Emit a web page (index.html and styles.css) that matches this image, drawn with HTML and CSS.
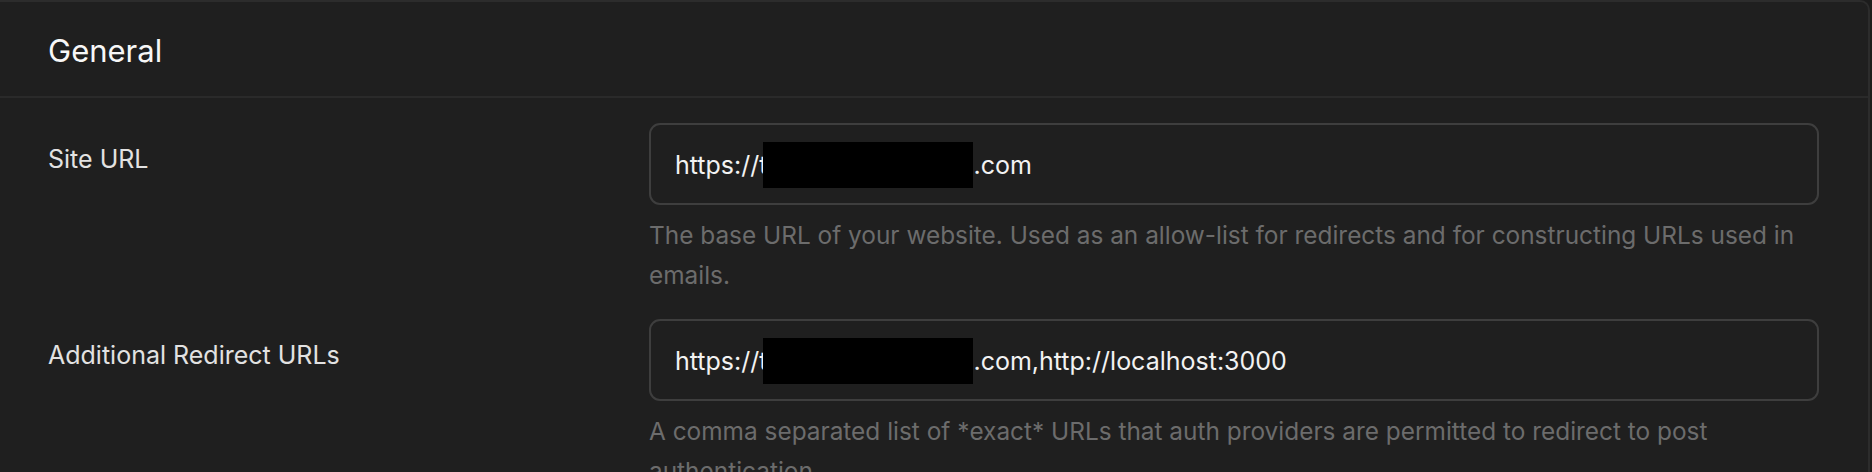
FILE: index.html
```html
<!DOCTYPE html>
<html lang="en">
<head>
  <meta charset="UTF-8" />
  <meta name="viewport" content="width=device-width, initial-scale=1.0" />
  <title>Auth Settings - General</title>
  <link rel="stylesheet" href="styles.css">
</head>
<body>
  <section class="panel">
    <header class="panel-header">
      <h2>General</h2>
    </header>

    <div class="panel-body">
      <div class="field">
        <label class="field-label">Site URL</label>
        <div class="field-control">
          <div class="text-input">https://t<span class="redacted"></span>.com</div>
          <p class="field-help">The base URL of your website. Used as an allow-list for redirects and for constructing URLs used in emails.</p>
        </div>
      </div>

      <div class="field">
        <label class="field-label">Additional Redirect URLs</label>
        <div class="field-control">
          <div class="text-input">https://t<span class="redacted"></span>.com,http://localhost:3000</div>
          <p class="field-help">A comma separated list of *exact* URLs that auth providers are permitted to redirect to post authentication.</p>
        </div>
      </div>
    </div>
  </section>
</body>
</html>
```

FILE: styles.css
```css
body {
  margin: 0;
  background-color: #1c1c1c;
  font-family: Inter, "Noto Sans", sans-serif;
  color: #ededed;
  overflow: hidden;
}
.panel {
  margin-right: 2px;
  background-color: #1f1f1f;
  border: 2px solid #2c2c2c;
  border-left: none;
  border-bottom: none;
  border-radius: 0 10px 0 0;
  height: 600px;
}
.panel-header {
  display: flex;
  align-items: center;
  box-sizing: border-box;
  height: 96px;
  padding: 2px 0 0 48px;
  border-bottom: 2px solid #2a2a2a;
}
.panel-header h2 {
  margin: 0;
  font-size: 31px;
  font-weight: 400;
  color: #f7f7f7;
}
.panel-body {
  padding: 25px 49px 0 48px;
}
.field {
  display: grid;
  grid-template-columns: 601px 1fr;
  margin-bottom: 24px;
}
.field-label {
  padding-top: 16px;
  font-size: 25px;
  line-height: 40px;
  color: #e2e2e2;
}
.text-input {
  display: flex;
  align-items: center;
  box-sizing: border-box;
  height: 82px;
  padding: 2px 24px 0;
  border: 2px solid #3e3e3e;
  border-radius: 11px;
  font-size: 25px;
  line-height: 40px;
  color: #f2f2f2;
  white-space: nowrap;
}
.redacted {
  flex: none;
  width: 210px;
  height: 46px;
  margin-left: -4px;
  background-color: #000;
}
.field-help {
  margin: 10px 0 0;
  font-size: 24.4px;
  line-height: 40px;
  color: #6c6c6c;
}
```
